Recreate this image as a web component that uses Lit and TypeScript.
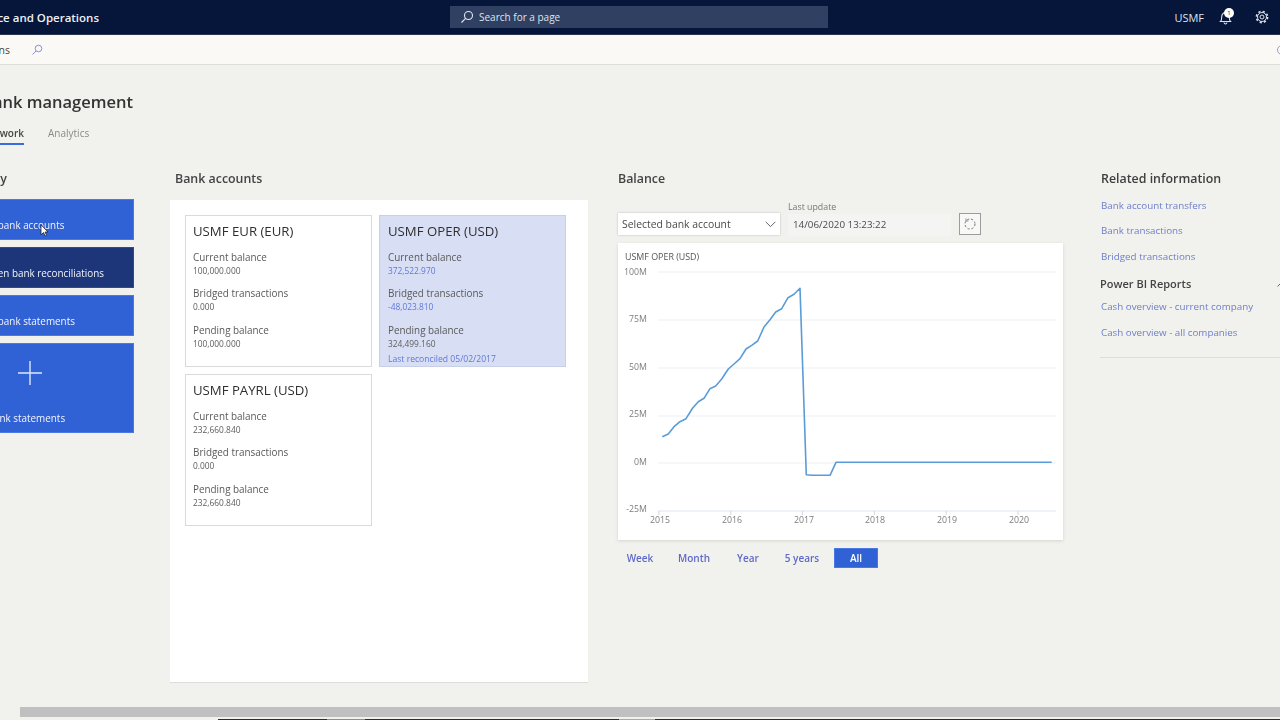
import { LitElement, html, svg, css } from "lit";
import { customElement } from "lit/decorators.js";

const cards = [
  { name: "USMF EUR (EUR)", cur: "100,000.000", bri: "0.000", pen: "100,000.000" },
  { name: "USMF OPER (USD)", cur: "372,522.970", bri: "-48,023.810", pen: "324,499.160", selected: true, last: "Last reconciled 05/02/2017" },
  { name: "USMF PAYRL (USD)", cur: "232,660.840", bri: "0.000", pen: "232,660.840" },
];

const points =
  "44.3,193.7 50.3,191 56,183.7 62,178.7 68,175.7 74.7,165 80.3,158.7 86,155.3 92,145.7 97.7,143 103.7,136 110.3,126 116,121 122,115.7 128,106 133.7,102.3 139.7,98 146,84 152,76.7 157.7,69 163.7,65.7 170,54.7 176,51.3 182,45.3 188.3,231.7 193.7,232.3 212,232.3 218,219.3 433.7,219.3";

const gridY = [29, 77, 125, 173, 220, 268];
const yLabels = [
  ["100M", 32],
  ["75M", 79],
  ["50M", 127],
  ["25M", 174],
  ["0M", 222],
  ["-25M", 269],
] as const;
const years = [
  ["2015", 42],
  ["2016", 114],
  ["2017", 186],
  ["2018", 257],
  ["2019", 329],
  ["2020", 401],
] as const;

@customElement("app-root")
export class AppRoot extends LitElement {
  static styles = css`
    :host {
      display: block;
      width: 1280px;
      height: 720px;
      background: #f1f1ee;
      overflow: hidden;
      font-family: "Open Sans", "Noto Sans", sans-serif;
      color: #3a3a3a;
    }
    .shell {
      position: relative;
      width: 1280px;
      height: 720px;
      display: flex;
      flex-direction: column;
      overflow: hidden;
      filter: blur(0.4px);
    }
    .header {
      height: 34px;
      flex: none;
      background: #06153a;
      border-bottom: 1px solid #2b3550;
      display: flex;
      align-items: center;
      color: #eef0f5;
    }
    .brand {
      margin-left: -60px;
      width: 159px;
      white-space: nowrap;
      font-size: 11.5px;
      font-weight: 600;
      flex: none;
      display: flex;
      justify-content: flex-end;
    }
    .search {
      margin-left: 351px;
      width: 378px;
      height: 22px;
      background: #2f4063;
      display: flex;
      align-items: center;
      gap: 5px;
      padding-left: 10px;
      box-sizing: border-box;
      font-size: 10px;
      color: #dfe3ec;
      flex: none;
    }
    .company {
      margin-left: auto;
      font-size: 11px;
      color: #dfe3ec;
      font-weight: 500;
    }
    .bell {
      position: relative;
      margin-left: 15px;
      width: 16px;
      height: 18px;
      display: flex;
      align-items: center;
    }
    .badge {
      position: absolute;
      left: 5px;
      top: 0;
      width: 10px;
      height: 10px;
      border-radius: 50%;
      background: #fff;
      color: #06153a;
      font-size: 6px;
      line-height: 10px;
      text-align: center;
    }
    .gear {
      margin-left: 20px;
      margin-right: 11px;
      display: flex;
    }
    .toolbar {
      height: 29px;
      flex: none;
      background: #faf9f5;
      border-bottom: 1.5px solid #dededa;
      display: flex;
      align-items: center;
      font-size: 10.5px;
      color: #444;
    }
    .opt {
      margin-left: -50px;
      width: 60px;
      display: flex;
      justify-content: flex-end;
      flex: none;
    }
    .find {
      margin-left: 21px;
      display: flex;
    }
    .ring {
      margin-left: auto;
      margin-right: -7px;
      width: 10px;
      height: 10px;
      box-sizing: border-box;
      border: 1px solid #9aa6c8;
      border-radius: 50%;
    }
    .main {
      flex: 1;
      min-height: 0;
      overflow: hidden;
    }
    .title {
      margin: 25px 0 0 -60px;
      width: 193px;
      height: 24px;
      line-height: 24px;
      display: flex;
      justify-content: flex-end;
      white-space: nowrap;
      font-size: 16.5px;
      font-weight: 600;
      color: #333;
    }
    .tabs {
      display: flex;
      height: 31px;
      font-size: 10px;
      padding-top: 12px;
      box-sizing: border-box;
    }
    .tab-on {
      margin-left: -36px;
      width: 60px;
      height: 19px;
      line-height: 14px;
      box-sizing: border-box;
      border-bottom: 2px solid #3a6bdc;
      display: flex;
      justify-content: flex-end;
      font-weight: 600;
      color: #444;
      white-space: nowrap;
    }
    .tab {
      margin-left: 24px;
      line-height: 14px;
      color: #8a8a8a;
    }
    .row {
      margin-top: 25px;
      display: flex;
      align-items: flex-start;
    }
    .sec {
      font-size: 12.4px;
      font-weight: 600;
      line-height: 17px;
      color: #444;
      white-space: nowrap;
    }
    .summary {
      margin-left: -40px;
      width: 174px;
      flex: none;
    }
    .summary .sec {
      width: 47px;
      display: flex;
      justify-content: flex-end;
      margin-bottom: 12px;
    }
    .tiles {
      display: flex;
      flex-direction: column;
      gap: 7.1px;
    }
    .tile {
      height: 41px;
      background: #3061d5;
      box-shadow: inset 0 0 0 1px #4a78e4;
      color: #f2f4fb;
      font-size: 9.9px;
      line-height: 14px;
      padding: 19px 0 0 24px;
      box-sizing: border-box;
      white-space: nowrap;
    }
    .tile.dark {
      background: #1d3579;
      box-shadow: inset 0 0 0 1px #2f4a95;
    }
    .tile.big {
      height: 90px;
      padding-top: 68px;
      position: relative;
      text-indent: -30px;
    }
    .plus {
      position: absolute;
      left: 57px;
      top: 17px;
    }
    .bank {
      margin-left: 36px;
      width: 418px;
      flex: none;
    }
    .bank .sec {
      padding-left: 5px;
      margin-bottom: 13px;
    }
    .panel {
      height: 483px;
      box-sizing: border-box;
      background: #fff;
      border-bottom: 1px solid #dcdcd8;
      padding: 15px;
      display: grid;
      grid-template-columns: 187px 187px;
      grid-auto-rows: 152px;
      gap: 7px;
    }
    .card {
      border: 1px solid #dadada;
      box-sizing: border-box;
      padding: 6px 7px 0;
      background: #fff;
      white-space: nowrap;
    }
    .card.sel {
      background: #d8dff4;
      border-color: #c7d0e8;
      padding-left: 8px;
    }
    .card h3 {
      margin: 0 0 10px;
      font-size: 13.2px;
      line-height: 18px;
      font-weight: 500;
      color: #2f2f2f;
    }
    .lbl {
      font-size: 9.9px;
      line-height: 14px;
      color: #595959;
    }
    .val {
      font-size: 8.4px;
      line-height: 14px;
      color: #5d5d5d;
      margin-bottom: 8.4px;
    }
    .sel .val.link,
    .rec {
      color: #5f78dc;
    }
    .sel .val.pen {
      margin-bottom: 1px;
    }
    .rec {
      font-size: 8.6px;
      line-height: 14px;
    }
    .balance {
      margin-left: 30px;
      width: 445px;
      flex: none;
    }
    .controls {
      margin-top: 13px;
      height: 36px;
      display: flex;
      align-items: flex-end;
    }
    .select {
      width: 162px;
      height: 22px;
      box-sizing: border-box;
      background: #fff;
      box-shadow: 0 0 2px #bbb;
      font-size: 10.4px;
      line-height: 22px;
      padding: 0 4px;
      display: flex;
      justify-content: space-between;
      align-items: center;
      color: #4a4a4a;
      flex: none;
      margin-bottom: 1px;
    }
    .upd {
      margin-left: 8px;
      width: 163px;
      flex: none;
    }
    .upd label {
      display: block;
      font-size: 8.8px;
      line-height: 12px;
      color: #777;
      margin-bottom: 1px;
    }
    .field {
      height: 22px;
      background: #f4f4f2;
      font-size: 9.8px;
      line-height: 22px;
      padding-left: 5px;
      color: #4a4a4a;
    }
    .refresh {
      margin-left: 8px;
      width: 22px;
      height: 22px;
      box-sizing: border-box;
      border: 1px solid #9d9d9d;
      display: flex;
      align-items: center;
      justify-content: center;
      background: #f8f8f6;
      margin-bottom: 1px;
    }
    .chart {
      margin-top: 7px;
      width: 445px;
      height: 297px;
      background: #fff;
      box-shadow: 0 1px 3px #d4d4d0;
    }
    .chart svg {
      display: block;
    }
    .chart-title {
      font-size: 8.9px;
      fill: #555;
    }
    .ax {
      font-size: 8.8px;
      fill: #7d7d7d;
    }
    .ax-y {
      text-anchor: end;
    }
    .ax-x {
      text-anchor: middle;
    }
    .grid-line {
      stroke: #eef0f3;
      stroke-width: 1.2;
    }
    .x-axis {
      stroke: #dde5ef;
      stroke-width: 1.2;
    }
    .tick {
      stroke: #cfd9e6;
    }
    .series {
      fill: none;
      stroke: #5b9bd8;
      stroke-width: 1.6;
      stroke-linejoin: round;
    }
    .ranges {
      margin-top: 8px;
      display: flex;
      gap: 10px;
    }
    .range {
      width: 44px;
      height: 20px;
      line-height: 20px;
      text-align: center;
      font-size: 10px;
      font-weight: 600;
      color: #6069c9;
    }
    .range.on {
      background: #3061d5;
      color: #fff;
      box-shadow: inset 0 0 0 1px #4a78e4;
    }
    .related {
      margin-left: 38px;
      width: 190px;
      flex: none;
    }
    .related .sec {
      color: #3f3f3f;
    }
    .links {
      margin-top: 6px;
    }
    .lnk {
      height: 25.4px;
      line-height: 25.4px;
      font-size: 9.8px;
      color: #6d7fcb;
      white-space: nowrap;
    }
    .pbi {
      margin: 6px 0 1px -1px;
      height: 18px;
      line-height: 18px;
      font-size: 11px;
      font-weight: 600;
      color: #444;
      display: flex;
      justify-content: space-between;
      align-items: center;
    }
    .pbi svg {
      margin-right: 6px;
    }
    .links.after {
      margin-top: 0;
    }
    .rule {
      margin: 12px 0 0 -1px;
      height: 1px;
      background: #dcdcd8;
    }
    .scroll {
      flex: none;
      margin-left: 20px;
      height: 10px;
      background: #c0c0c0;
    }
    .gap {
      flex: none;
      height: 2px;
    }
    .strip {
      flex: none;
      height: 1px;
      margin-left: 218px;
      background: #2c2f2c;
      display: flex;
    }
    .strip i {
      display: block;
      height: 1px;
    }
    .strip .g {
      margin-left: 109px;
      width: 38px;
      background: #8a8f90;
    }
    .strip .o {
      margin-left: 254px;
      width: 36px;
      background: #e59a55;
    }
    .cursor {
      position: absolute;
      left: 40px;
      top: 224px;
    }
  `;

  private card(c: (typeof cards)[number] & { selected?: boolean; last?: string }) {
    return html`
      <div class="card ${c.selected ? "sel" : ""}">
        <h3>${c.name}</h3>
        <div class="lbl">Current balance</div>
        <div class="val link">${c.cur}</div>
        <div class="lbl">Bridged transactions</div>
        <div class="val link">${c.bri}</div>
        <div class="lbl">Pending balance</div>
        <div class="val pen">${c.pen}</div>
        ${c.last ? html`<div class="rec">${c.last}</div>` : ""}
      </div>
    `;
  }

  render() {
    return html`
      <div class="shell">
        <div class="header">
          <div class="brand">Finance and Operations</div>
          <div class="search">
            <svg width="14" height="14" viewBox="0 0 14 14" fill="none" stroke="#e4e7ef" stroke-width="1.1">
              <circle cx="8.5" cy="5.5" r="4" />
              <path d="M5.6 8.4 1.5 12.5" />
            </svg>
            <span>Search for a page</span>
          </div>
          <div class="company">USMF</div>
          <div class="bell">
            <svg width="13" height="15" viewBox="0 0 13 15" fill="none" stroke="#dfe3ec" stroke-width="1.1">
              <path d="M1.5 11.5c1-1 1.2-2.2 1.2-4.5 0-2.6 1.5-4.5 3.8-4.5s3.800 1.900 3.800 4.500c0 2.300.2 3.500 1.200 4.500z" />
              <path d="M5 12.500c.2 1 .8 1.500 1.500 1.500s1.300-.5 1.500-1.500" />
            </svg>
            <span class="badge">1</span>
          </div>
          <div class="gear">
            <svg width="14" height="14" viewBox="0 0 14 14" fill="none" stroke="#dfe3ec">
              <circle cx="7" cy="7" r="2" stroke-width="1" />
              <circle cx="7" cy="7" r="4.500" stroke-width="1" />
              <circle cx="7" cy="7" r="5.600" stroke-width="1.600" stroke-dasharray="2.200 2.200" />
            </svg>
          </div>
        </div>

        <div class="toolbar">
          <div class="opt">Options</div>
          <div class="find">
            <svg width="12" height="12" viewBox="0 0 12 12" fill="none" stroke="#8f8fd8" stroke-width="1">
              <circle cx="7.500" cy="4.500" r="3.300" />
              <path d="M5 7 1.500 10.500" />
            </svg>
          </div>
          <div class="ring"></div>
        </div>

        <div class="main">
          <div class="title">Bank management</div>
          <div class="tabs">
            <div class="tab-on">My work</div>
            <div class="tab">Analytics</div>
          </div>

          <div class="row">
            <section class="summary">
              <div class="sec">Summary</div>
              <div class="tiles">
                <div class="tile">All bank accounts</div>
                <div class="tile dark">Open bank reconciliations</div>
                <div class="tile">All bank statements</div>
                <div class="tile big">
                  <svg class="plus" width="26" height="26" viewBox="0 0 26 26" stroke="#dbe9fb" stroke-width="1.400">
                    <path d="M13 1v24M1 13h24" />
                  </svg>
                  Import bank statements
                </div>
              </div>
            </section>

            <section class="bank">
              <div class="sec">Bank accounts</div>
              <div class="panel">${cards.map((c) => this.card(c))}</div>
            </section>

            <section class="balance">
              <div class="sec">Balance</div>
              <div class="controls">
                <div class="select">
                  <span>Selected bank account</span>
                  <svg width="11" height="7" viewBox="0 0 11 7" fill="none" stroke="#666" stroke-width="1">
                    <path d="M.7.8 5.500 5.600 10.300.8" />
                  </svg>
                </div>
                <div class="upd">
                  <label>Last update</label>
                  <div class="field">14/06/2020 13:23:22</div>
                </div>
                <div class="refresh">
                  <svg width="14" height="14" viewBox="0 0 14 14" fill="none" stroke="#777" stroke-width="1">
                    <circle cx="7" cy="7" r="5" stroke-dasharray="2.200 1.800" />
                    <path d="M3 1.500v2.500h2.500" stroke-width=".8" />
                  </svg>
                </div>
              </div>
              <div class="chart">
                <svg width="445" height="297" viewBox="0 0 445 297">
                  <text class="chart-title" x="7" y="17">USMF OPER (USD)</text>
                  ${gridY.map(
                    (y, i) => svg`
                      <line class="${i === 5 ? "x-axis" : "grid-line"}" x1="40" x2="438" y1="${y}" y2="${y}"></line>
                      <text class="ax ax-y" x="29" y="${yLabels[i][1]}">${yLabels[i][0]}</text>
                    `
                  )}
                  ${years.map(
                    ([label, x], i) => svg`
                      <line class="tick" x1="${41 + i * 71.8}" x2="${41 + i * 71.8}" y1="268" y2="272"></line>
                      <text class="ax ax-x" x="${x}" y="280">${label}</text>
                    `
                  )}
                  <polyline class="series" points="${points}"></polyline>
                </svg>
              </div>
              <div class="ranges">
                <div class="range">Week</div>
                <div class="range">Month</div>
                <div class="range">Year</div>
                <div class="range">5 years</div>
                <div class="range on">All</div>
              </div>
            </section>

            <section class="related">
              <div class="sec">Related information</div>
              <div class="links">
                <div class="lnk">Bank account transfers</div>
                <div class="lnk">Bank transactions</div>
                <div class="lnk">Bridged transactions</div>
              </div>
              <div class="pbi">
                <span>Power BI Reports</span>
                <svg width="8" height="5" viewBox="0 0 8 5" fill="none" stroke="#666" stroke-width="1">
                  <path d="M.5 4.500 4 1l3.500 3.500" />
                </svg>
              </div>
              <div class="links after">
                <div class="lnk">Cash overview - current company</div>
                <div class="lnk">Cash overview - all companies</div>
              </div>
              <div class="rule"></div>
            </section>
          </div>
        </div>

        <div class="scroll"></div>
        <div class="gap"></div>
        <div class="strip"><i class="g"></i><i class="o"></i></div>

        <svg class="cursor" width="9" height="13" viewBox="0 0 9 13">
          <path d="M1 .8v10l2.500-2.200 1.600 3.400 1.500-.7-1.600-3.300H8z" fill="#fff" stroke="#222" stroke-width=".8" />
        </svg>
      </div>
    `;
  }
}
